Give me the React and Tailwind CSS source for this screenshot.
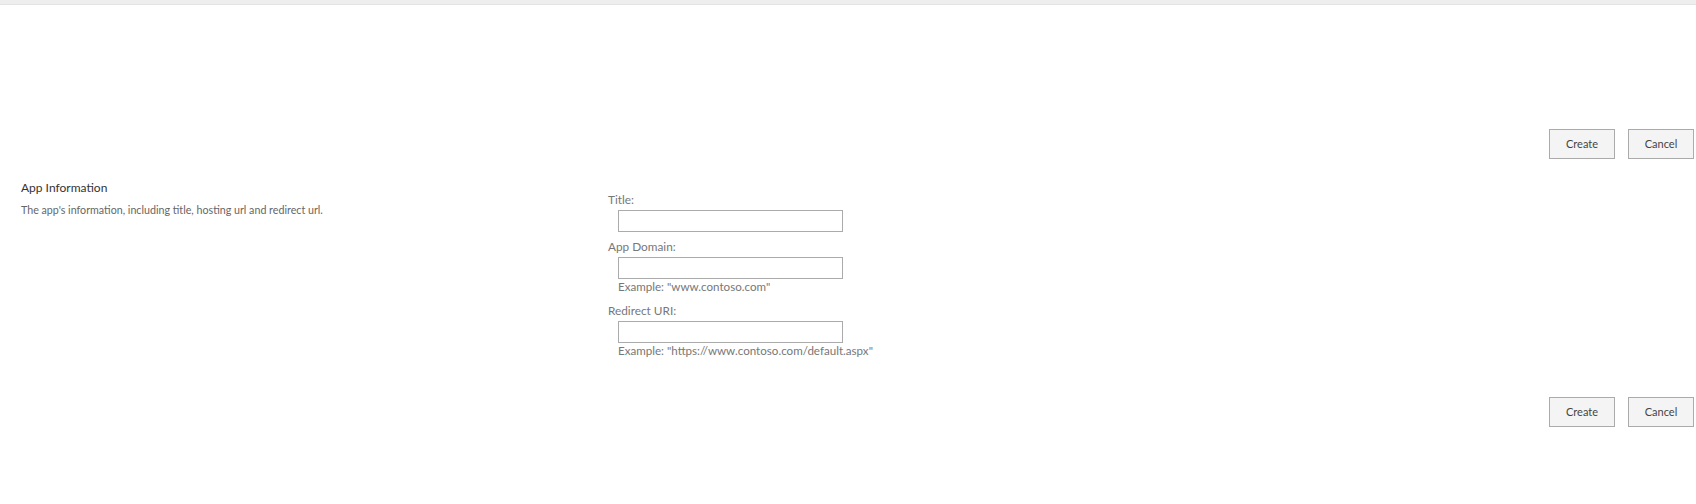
import React from "react";

function ActionButtons({ className = "" }) {
  return (
    <div className={"flex justify-end gap-[13px] pr-[2px] " + className}>
      <button className="h-[30px] w-[66px] border border-[#ababab] bg-[#f4f4f4] text-[11px] text-[#444444]">
        Create
      </button>
      <button className="h-[30px] w-[66px] border border-[#ababab] bg-[#f4f4f4] text-[11px] text-[#444444]">
        Cancel
      </button>
    </div>
  );
}

function Field({ label, example, className = "" }) {
  return (
    <div className={className}>
      <div className="text-[11.8px] leading-[18px] text-[#777777]">{label}</div>
      <div className="pl-[10px]">
        <input
          type="text"
          className="mt-[1px] block h-[22px] w-[225px] border border-[#ababab] bg-white outline-none"
        />
        {example && (
          <div className="text-[11.6px] leading-[16px] text-[#777777]">{example}</div>
        )}
      </div>
    </div>
  );
}

export default function App() {
  return (
    <div className="min-h-[504px] bg-white font-['Lato',sans-serif]">
      <div className="h-[5px] border-b border-[#e3e3e3] bg-[#eeeeee]" />

      <ActionButtons className="mt-[124px]" />

      <div className="flex">
        <div className="w-[608px] shrink-0 pl-[21px] pt-[20px]">
          <h3 className="text-[12px] leading-[18px] text-[#333333]">App Information</h3>
          <p className="mt-[6px] text-[10.7px] leading-[14px] text-[#666666]">
            The app's information, including title, hosting url and redirect url.
          </p>
        </div>
        <div className="pt-[32px]">
          <Field label="Title:" />
          <Field label="App Domain:" example={'Example: "www.contoso.com"'} className="mt-[6px]" />
          <Field
            label="Redirect URI:"
            example={'Example: "https://www.contoso.com/default.aspx"'}
            className="mt-[7px]"
          />
        </div>
      </div>

      <ActionButtons className="mt-[38px]" />
    </div>
  );
}
